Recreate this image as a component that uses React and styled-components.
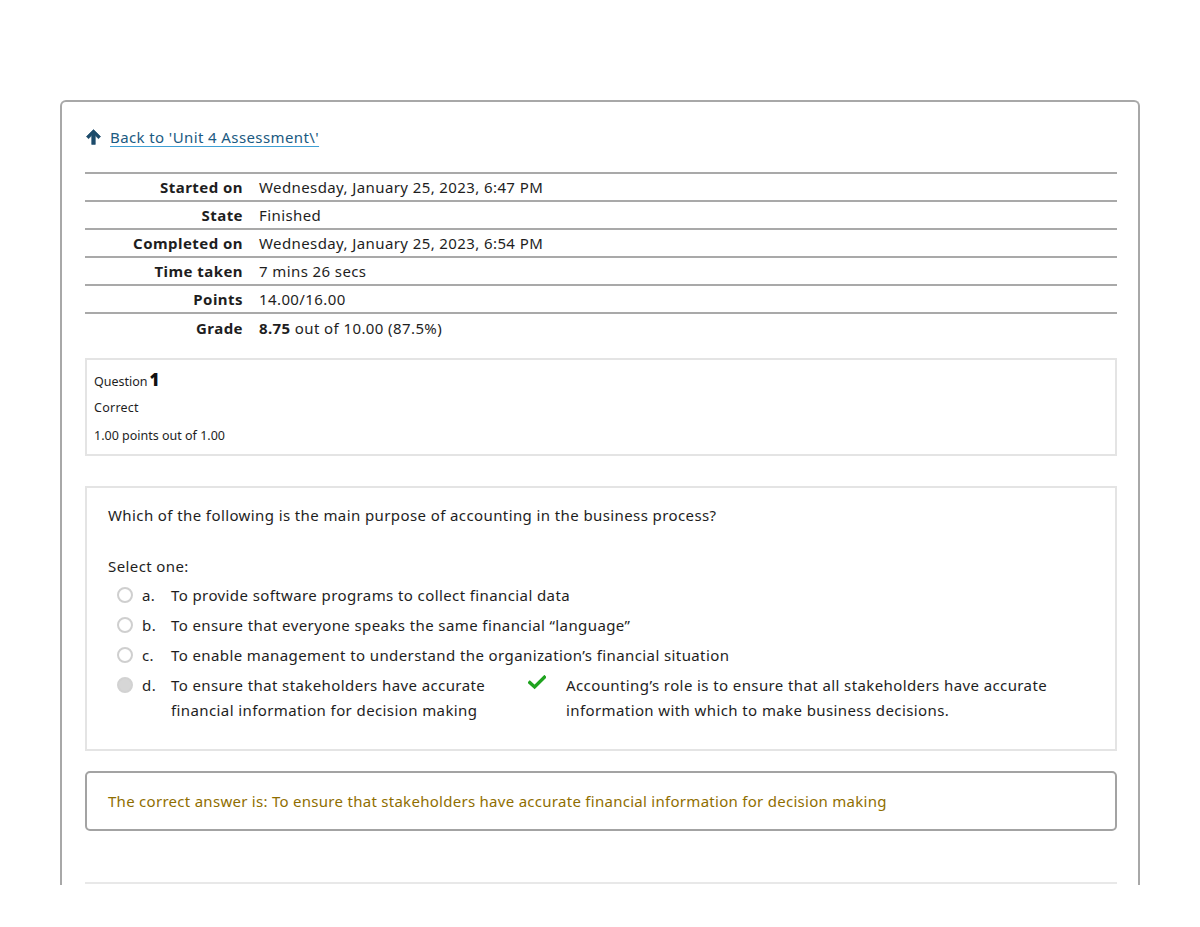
import React from "react";
import styled, { createGlobalStyle } from "styled-components";

const GlobalStyle = createGlobalStyle`
  html, body {
    margin: 0;
    padding: 0;
    background: #ffffff;
  }
  body {
    font-family: "Noto Sans", "Open Sans", sans-serif;
    color: #1e1e1e;
  }
`;

const Page = styled.div`
  padding: 100px 60px 0 60px;
  height: 927px;
  box-sizing: border-box;
`;

const Frame = styled.div`
  border: 2px solid #a8a8a8;
  border-bottom: none;
  border-radius: 6px 6px 0 0;
  height: 785px;
  box-sizing: border-box;
  padding: 25px 21px 0 23px;
  display: flex;
  flex-direction: column;
`;

const BackRow = styled.div`
  display: flex;
  align-items: center;
  gap: 10px;
  height: 20px;
  padding-left: 2px;
  margin-bottom: 25px;
`;

const BackIcon = styled.svg`
  width: 15px;
  height: 16px;
  flex: none;
  margin-left: -1px;
  margin-right: -1px;
`;

const BackLink = styled.a`
  font-size: 15px;
  color: #1b5a82;
  text-decoration: underline;
  text-decoration-color: #3f9fd4;
  text-underline-offset: 3px;
  letter-spacing: 0.4px;
`;

const SummaryTable = styled.div`
  display: flex;
  flex-direction: column;
`;

const SummaryRow = styled.div`
  display: grid;
  grid-template-columns: 158px 1fr;
  column-gap: 16px;
  align-items: center;
  height: 28px;
  border-top: 2px solid #a9a9a9;
  font-size: 15px;
  box-sizing: border-box;
  &:last-child {
    height: 30px;
  }
`;

const SummaryLabel = styled.div`
  text-align: right;
  font-weight: 700;
  letter-spacing: 0.45px;
  color: #1e1e1e;
`;

const SummaryValue = styled.div`
  color: #1e1e1e;
  letter-spacing: 0.4px;
`;

const Strong = styled.b`
  font-weight: 700;
`;

const InfoBox = styled.div`
  margin-top: 16px;
  border: 2px solid #e4e4e4;
  height: 98px;
  box-sizing: border-box;
  padding: 10px 7px 0 7px;
  display: flex;
  flex-direction: column;
`;

const InfoLine = styled.div`
  height: 28px;
  line-height: 20px;
  font-size: 12.5px;
  color: #1e1e1e;
  letter-spacing: ${(p) => (p.$spread ? "0.25px" : "0")};
`;

const QNumber = styled.span`
  font-size: 17px;
  font-weight: 900;
  color: #111111;
  margin-left: 2px;
`;

const QuestionBox = styled.div`
  margin-top: 30px;
  border: 2px solid #e4e4e4;
  height: 265px;
  box-sizing: border-box;
  padding: 15px 21px 0 21px;
  font-size: 15px;
  letter-spacing: 0.4px;
`;

const QuestionText = styled.div`
  line-height: 24px;
  height: 24px;
`;

const Prompt = styled.div`
  margin-top: 27px;
  line-height: 24px;
`;

const Options = styled.div`
  display: flex;
  flex-direction: column;
  margin-top: 5px;
`;

const OptionRow = styled.div`
  display: flex;
  align-items: flex-start;
  line-height: 25px;
  min-height: 30px;
  padding-left: 9px;
`;

const Radio = styled.span`
  flex: none;
  width: 16px;
  height: 16px;
  margin-top: 4px;
  border-radius: 50%;
  box-sizing: border-box;
  border: 2px solid ${(p) => (p.$checked ? "#d2d2d2" : "#cfcfcf")};
  background: ${(p) => (p.$checked ? "#d6d6d6" : "#ffffff")};
`;

const Letter = styled.span`
  flex: none;
  width: 29px;
  margin-left: 9px;
`;

const OptionText = styled.span`
  flex: ${(p) => (p.$narrow ? "none" : "1")};
  width: ${(p) => (p.$narrow ? "357px" : "auto")};
`;

const Check = styled.svg`
  flex: none;
  width: 18px;
  height: 15px;
  margin-top: 2px;
  margin-right: 20px;
`;

const Feedback = styled.span`
  width: 500px;
`;

const AnswerBox = styled.div`
  margin-top: 20px;
  border: 2px solid #a3a3a3;
  border-radius: 5px;
  height: 60px;
  box-sizing: border-box;
  padding: 0 21px;
  display: flex;
  align-items: center;
  font-size: 15px;
  letter-spacing: 0.28px;
  color: #8f6e00;
`;

const BottomRule = styled.div`
  margin-top: 51px;
  border-top: 2px solid #e8e8e8;
`;

const summary = [
  ["Started on", "Wednesday, January 25, 2023, 6:47 PM"],
  ["State", "Finished"],
  ["Completed on", "Wednesday, January 25, 2023, 6:54 PM"],
  ["Time taken", "7 mins 26 secs"],
  ["Points", "14.00/16.00"],
  [
    "Grade",
    <>
      <Strong>8.75</Strong> out of 10.00 (87.5%)
    </>,
  ],
];

const options = [
  { letter: "a.", text: "To provide software programs to collect financial data" },
  { letter: "b.", text: "To ensure that everyone speaks the same financial \u201Clanguage\u201D" },
  { letter: "c.", text: "To enable management to understand the organization\u2019s financial situation" },
  {
    letter: "d.",
    text: "To ensure that stakeholders have accurate financial information for decision making",
    checked: true,
    feedback:
      "Accounting\u2019s role is to ensure that all stakeholders have accurate information with which to make business decisions.",
  },
];

// Solid up arrow: wide triangular head over a thick shaft
function ArrowUp() {
  return (
    <BackIcon viewBox="0 0 15 16" aria-hidden="true">
      <path
        d="M7.5 0.6 L14.6 7.6 L12.4 9.7 L9.3 6.6 L9.3 15.4 L5.7 15.4 L5.7 6.6 L2.6 9.7 L0.4 7.6 Z"
        fill="#1d4c6b"
        stroke="#1d4c6b"
        strokeWidth="0.6"
        strokeLinejoin="round"
      />
    </BackIcon>
  );
}

function CheckMark() {
  return (
    <Check viewBox="0 0 18 15" aria-hidden="true">
      <path
        d="M1.8 7.6 L6.6 12 L16.4 2.2"
        fill="none"
        stroke="#1fa31f"
        strokeWidth="3.4"
        strokeLinecap="square"
      />
    </Check>
  );
}

export default function App() {
  return (
    <>
      <GlobalStyle />
      <Page>
        <Frame>
          <BackRow>
            <ArrowUp />
            <BackLink href="#">Back to 'Unit 4 Assessment\'</BackLink>
          </BackRow>

          <SummaryTable>
            {summary.map(([label, value]) => (
              <SummaryRow key={label}>
                <SummaryLabel>{label}</SummaryLabel>
                <SummaryValue>{value}</SummaryValue>
              </SummaryRow>
            ))}
          </SummaryTable>

          <InfoBox>
            <InfoLine>
              Question<QNumber>1</QNumber>
            </InfoLine>
            <InfoLine $spread>Correct</InfoLine>
            <InfoLine>1.00 points out of 1.00</InfoLine>
          </InfoBox>

          <QuestionBox>
            <QuestionText>
              Which of the following is the main purpose of accounting in the business process?
            </QuestionText>
            <Prompt>Select one:</Prompt>
            <Options>
              {options.map((o) => (
                <OptionRow key={o.letter}>
                  <Radio $checked={o.checked} />
                  <Letter>{o.letter}</Letter>
                  <OptionText $narrow={!!o.feedback}>{o.text}</OptionText>
                  {o.feedback && <CheckMark />}
                  {o.feedback && <Feedback>{o.feedback}</Feedback>}
                </OptionRow>
              ))}
            </Options>
          </QuestionBox>

          <AnswerBox>
            The correct answer is: To ensure that stakeholders have accurate financial information for decision making
          </AnswerBox>

          <BottomRule />
        </Frame>
      </Page>
    </>
  );
}
